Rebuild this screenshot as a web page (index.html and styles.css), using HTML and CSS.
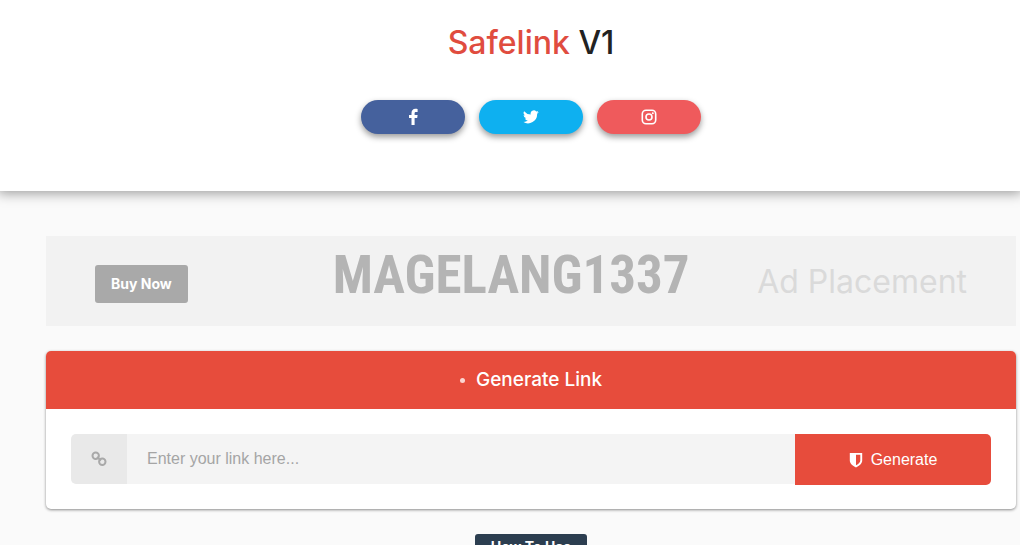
FILE: index.html
```html
<!DOCTYPE html>
<html lang="en">
<head>
<meta charset="utf-8">
<meta name="viewport" content="width=device-width, initial-scale=1">
<title>Safelink V1</title>
<link rel="stylesheet" href="styles.css">
</head>
<body>

<header class="header">
    <h1 class="title"><span>Safelink</span> V1</h1>
    <nav class="social">
        <a href="#" class="facebook" aria-label="Facebook">
            <svg width="18" height="18" viewBox="0 0 18 18"><path fill="#fff" d="M13.600 1v2.900h-1.600c-1.200 0-1.400.6-1.400 1.400v1.600h3l-.4 3h-2.600v7H7.500v-7H5V6.900h2.500V5c0-2.600 1.600-4.200 3.900-4.200 1 0 1.900.1 2.200.2z"/></svg>
        </a>
        <a href="#" class="twitter" aria-label="Twitter">
            <svg width="16" height="16" viewBox="0 0 24 24"><path fill="#fff" d="M23.6 4.600a10 10 0 0 1-2.800.8 4.800 4.800 0 0 0 2.100-2.700 9.600 9.600 0 0 1-3 1.200 4.800 4.800 0 0 0-8.300 4.400A13.700 13.700 0 0 1 1.700 3.200a4.800 4.800 0 0 0 1.500 6.500A4.800 4.800 0 0 1 1 9.100a4.800 4.800 0 0 0 3.900 4.800 4.800 4.800 0 0 1-2.200.1 4.800 4.800 0 0 0 4.500 3.300A9.700 9.700 0 0 1 .1 19.300 13.700 13.700 0 0 0 21.200 7.100a9.800 9.800 0 0 0 2.400-2.500z"/></svg>
        </a>
        <a href="#" class="instagram" aria-label="Instagram">
            <svg width="16" height="16" viewBox="0 0 16 16" fill="none" stroke="#fff" stroke-width="1.600"><rect x="1.300" y="1.300" width="13.400" height="13.400" rx="3.700"/><circle cx="8" cy="8" r="3"/><circle cx="11.800" cy="4.200" r="1" fill="#fff" stroke="none"/></svg>
        </a>
    </nav>
</header>

<main class="container">
    <div class="ad">
        <a href="#" class="buy">Buy Now</a>
        <strong class="ad-logo">MAGELANG1337</strong>
        <span class="ad-text">Ad Placement</span>
    </div>

    <section class="card">
        <h2 class="card-title">Generate Link</h2>
        <form class="link-form">
            <label class="link-icon" for="link" aria-label="Link">
                <svg width="16" height="16" viewBox="0 0 16 16" fill="none" stroke="#a9a9a9" stroke-width="2"><circle cx="4.700" cy="4.700" r="3.200"/><circle cx="11.300" cy="10.800" r="3.200"/><path d="M6 6l4 3.600"/></svg>
            </label>
            <input type="text" id="link" class="link-input" placeholder="Enter your link here...">
            <button type="button" class="generate">
                <svg width="14" height="16" viewBox="0 0 14 16"><path fill="#fff" fill-rule="evenodd" d="M.8 1h12.400v7.500c0 3-2.600 5.200-6.200 6.900C3.400 13.700.8 11.500.8 8.500zM7 2.800v10.400c2.700-1.400 4.300-2.900 4.300-4.700V2.800z"/></svg>
                Generate
            </button>
        </form>
    </section>

    <button type="button" class="how">How To Use</button>
</main>

</body>
</html>
```
FILE: styles.css
```css
* {
    box-sizing: border-box;
}

body {
    margin: 0;
    font-family: Inter, sans-serif;
    background: #fafafa;
    color: #222;
}

.header {
    background: #fff;
    padding: 22px 4px 57px 46px;
    text-align: center;
    box-shadow: 0 0 12px 2px rgba(0, 0, 0, 0.4);
}

.title {
    margin: 0 0 36px;
    font-size: 32px;
    line-height: 42px;
    font-weight: 500;
}

.title span {
    color: #e04c3f;
}

.social {
    display: flex;
    justify-content: center;
    gap: 14px;
}

.social a {
    display: flex;
    align-items: center;
    justify-content: center;
    width: 104px;
    height: 34px;
    border-radius: 17px;
    box-shadow: 0 3px 6px rgba(0, 0, 0, 0.4);
}

.facebook {
    background: #45619d;
}

.twitter {
    background: #0eb0f0;
}

.instagram {
    background: #ef5a5c;
}

.container {
    display: flex;
    flex-direction: column;
    align-items: center;
    gap: 25px;
    padding: 45px 4px 25px 46px;
}

.ad {
    display: grid;
    grid-template-columns: 6fr auto 7fr;
    align-items: center;
    width: 100%;
    height: 90px;
    padding: 0 49px;
    background: #f2f2f2;
}

.buy {
    justify-self: start;
    margin-top: 6px;
    padding: 0 16px;
    border-radius: 3px;
    background: #a9a9a9;
    color: #fff;
    font-size: 14px;
    line-height: 38px;
    font-weight: 700;
    text-decoration: none;
}

.ad-logo {
    margin-bottom: 12px;
    font-family: "Roboto Condensed", "Liberation Sans Narrow", sans-serif;
    font-size: 53px;
    line-height: 60px;
    color: #b4b4b4;
}

.ad-text {
    justify-self: end;
    font-size: 32px;
    color: #dadada;
}

.card {
    width: 100%;
    border-radius: 5px;
    overflow: hidden;
    background: #fff;
    box-shadow: 0 1px 3px rgba(0, 0, 0, 0.45);
}

.card-title {
    display: flex;
    align-items: center;
    justify-content: center;
    gap: 11px;
    margin: 0;
    background: #e74c3c;
    color: #fff;
    font-size: 19px;
    line-height: 58px;
    font-weight: 500;
}

.card-title::before {
    content: '';
    width: 5px;
    height: 5px;
    border-radius: 50%;
    background: #fbd5d1;
}

.link-form {
    display: flex;
    padding: 25px 25px 24px;
}

.link-icon {
    display: flex;
    align-items: center;
    justify-content: center;
    width: 56px;
    height: 50px;
    border-radius: 5px 0 0 5px;
    background: #e9e9e9;
}

.link-input {
    flex: 1;
    min-width: 0;
    height: 50px;
    padding: 0 20px;
    border: 0;
    background: #f4f4f4;
    font-family: "Liberation Sans", sans-serif;
    font-size: 16px;
}

.link-input::placeholder {
    color: #a5a5a5;
}

.generate {
    display: flex;
    align-items: center;
    justify-content: center;
    gap: 8px;
    width: 196px;
    height: 51px;
    border: 0;
    border-radius: 0 5px 5px 0;
    background: #e74c3c;
    color: #fff;
    font-family: "Liberation Sans", sans-serif;
    font-size: 16px;
    cursor: pointer;
}

.how {
    padding: 0 16px;
    border: 0;
    border-radius: 3px;
    background: #2c3e50;
    color: #fff;
    font-family: Inter, sans-serif;
    font-size: 14px;
    line-height: 26px;
    font-weight: 700;
    cursor: pointer;
}
```
